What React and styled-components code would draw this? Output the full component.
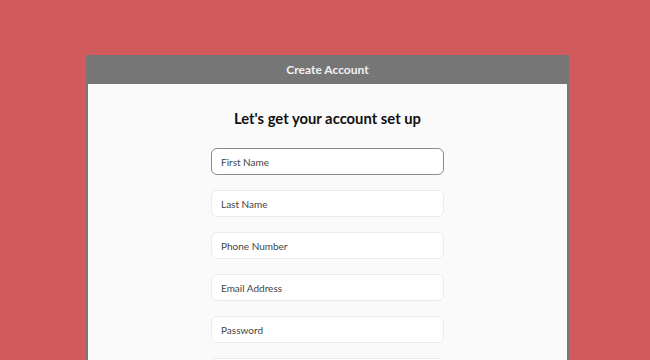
import React from 'react';
import styled, { createGlobalStyle } from 'styled-components';

const GlobalStyle = createGlobalStyle`
  html, body {
    margin: 0;
    padding: 0;
    background: #d05a5c;
    font-family: Lato, "Noto Sans", sans-serif;
  }
`;

const fields = ['First Name', 'Last Name', 'Phone Number', 'Email Address', 'Password', 'Confirm Password'];

function App() {
  return (
    <>
      <GlobalStyle />
      <Page>
        <Card>
          <Header>Create Account</Header>
          <Body>
            <Title>Let's get your account set up</Title>
            <Form>
              {fields.map((f, i) => (
                <Field key={f} placeholder={f} $focused={i === 0} />
              ))}
            </Form>
          </Body>
        </Card>
      </Page>
    </>
  );
}

const Page = styled.div`
  height: 360px;
  overflow: hidden;
  padding-top: 55px;
  box-sizing: border-box;
  display: flex;
  justify-content: center;
`;

const Card = styled.div`
  width: 483px;
  margin-left: 5px;
  background: #fafafa;
  border-left: 2px solid #777;
  border-right: 2px solid #777;
  box-sizing: border-box;
  display: flex;
  flex-direction: column;
`;

const Header = styled.div`
  flex-shrink: 0;
  height: 29px;
  padding-bottom: 1px;
  box-sizing: border-box;
  background: #767676;
  color: #f2f2f2;
  font-size: 12px;
  font-weight: 700;
  display: flex;
  align-items: center;
  justify-content: center;
`;

const Body = styled.div`
  display: flex;
  flex-direction: column;
  align-items: center;
  padding-top: 25px;
`;

const Title = styled.h1`
  margin: 0 0 21px;
  font-size: 14.8px;
  font-weight: 700;
  color: #111;
`;

const Form = styled.div`
  display: flex;
  flex-direction: column;
  gap: 15px;
`;

const Field = styled.input`
  flex-shrink: 0;
  width: 233px;
  height: 27px;
  box-sizing: border-box;
  padding: 0 9px;
  border: 1px solid ${p => (p.$focused ? '#8a8a8a' : '#efeaea')};
  border-radius: 6px;
  background: #fff;
  font-family: inherit;
  font-size: 10px;
  outline: none;
  &::placeholder {
    color: #444;
  }
`;

export default App;
